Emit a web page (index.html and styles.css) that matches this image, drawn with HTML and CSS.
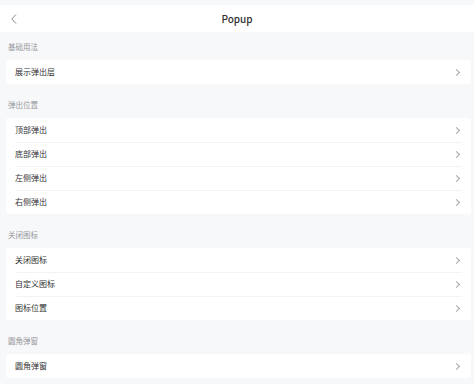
FILE: index.html
```html
<!DOCTYPE html>
<html lang="zh-CN">
<head>
    <meta charset="UTF-8">
    <meta name="viewport" content="width=device-width, initial-scale=1.0">
    <title>Popup</title>
    <link rel="stylesheet" href="styles.css">
</head>
<body>
    <div class="nav-bar">
        <span class="nav-back">
            <svg width="8" height="12" viewBox="0 0 8 12"><path d="M6 1.5 L1.8 6 L6 10.5" fill="none" stroke="#8a8b8f" stroke-width="1" /></svg>
        </span>
        <span class="nav-title">Popup</span>
    </div>

    <div class="demo-block first">
        <h2 class="demo-title">基础用法</h2>
        <div class="cell-group">
            <div class="cell"><span>展示弹出层</span><i class="arrow"></i></div>
        </div>
    </div>

    <div class="demo-block">
        <h2 class="demo-title">弹出位置</h2>
        <div class="cell-group">
            <div class="cell"><span>顶部弹出</span><i class="arrow"></i></div>
            <div class="cell"><span>底部弹出</span><i class="arrow"></i></div>
            <div class="cell"><span>左侧弹出</span><i class="arrow"></i></div>
            <div class="cell"><span>右侧弹出</span><i class="arrow"></i></div>
        </div>
    </div>

    <div class="demo-block">
        <h2 class="demo-title">关闭图标</h2>
        <div class="cell-group">
            <div class="cell"><span>关闭图标</span><i class="arrow"></i></div>
            <div class="cell"><span>自定义图标</span><i class="arrow"></i></div>
            <div class="cell"><span>图标位置</span><i class="arrow"></i></div>
        </div>
    </div>

    <div class="demo-block">
        <h2 class="demo-title">圆角弹窗</h2>
        <div class="cell-group">
            <div class="cell"><span>圆角弹窗</span><i class="arrow"></i></div>
        </div>
    </div>
</body>
</html>
```

FILE: styles.css
```css
body {
    margin: 0;
    padding: 5px 0 0;
    background-color: #f7f8fa;
    font-family: "Noto Sans CJK SC", "Noto Sans", sans-serif;
    color: #323233;
    height: 384px;
    box-sizing: border-box;
    overflow: hidden;
}

.nav-bar {
    display: flex;
    align-items: center;
    justify-content: center;
    position: relative;
    height: 27px;
    background: #fff;
}

.nav-back {
    position: absolute;
    left: 10px;
    top: 8px;
    display: flex;
}

.nav-title {
    font-size: 10px;
    font-weight: 500;
    color: #323233;
}

.demo-title {
    margin: 0;
    padding: 16px 8px 8px;
    font-size: 7.5px;
    line-height: 10px;
    font-weight: 400;
    color: #969799;
}

.demo-block.first .demo-title {
    padding-top: 10px;
}

.cell-group {
    margin: 0 3px 0 6px;
    background: #fff;
    border-radius: 3px;
    overflow: hidden;
}

.cell {
    display: flex;
    align-items: center;
    justify-content: space-between;
    height: 24px;
    padding: 0 12px 0 9px;
    font-size: 8px;
    line-height: 10px;
    position: relative;
}

.cell + .cell::before {
    content: "";
    position: absolute;
    left: 9px;
    right: 9px;
    top: 0;
    border-top: 1px solid #f2f3f5;
}

.arrow {
    width: 4px;
    height: 4px;
    border-top: 1px solid #a6a7aa;
    border-right: 1px solid #a6a7aa;
    transform: rotate(45deg);
}
```
